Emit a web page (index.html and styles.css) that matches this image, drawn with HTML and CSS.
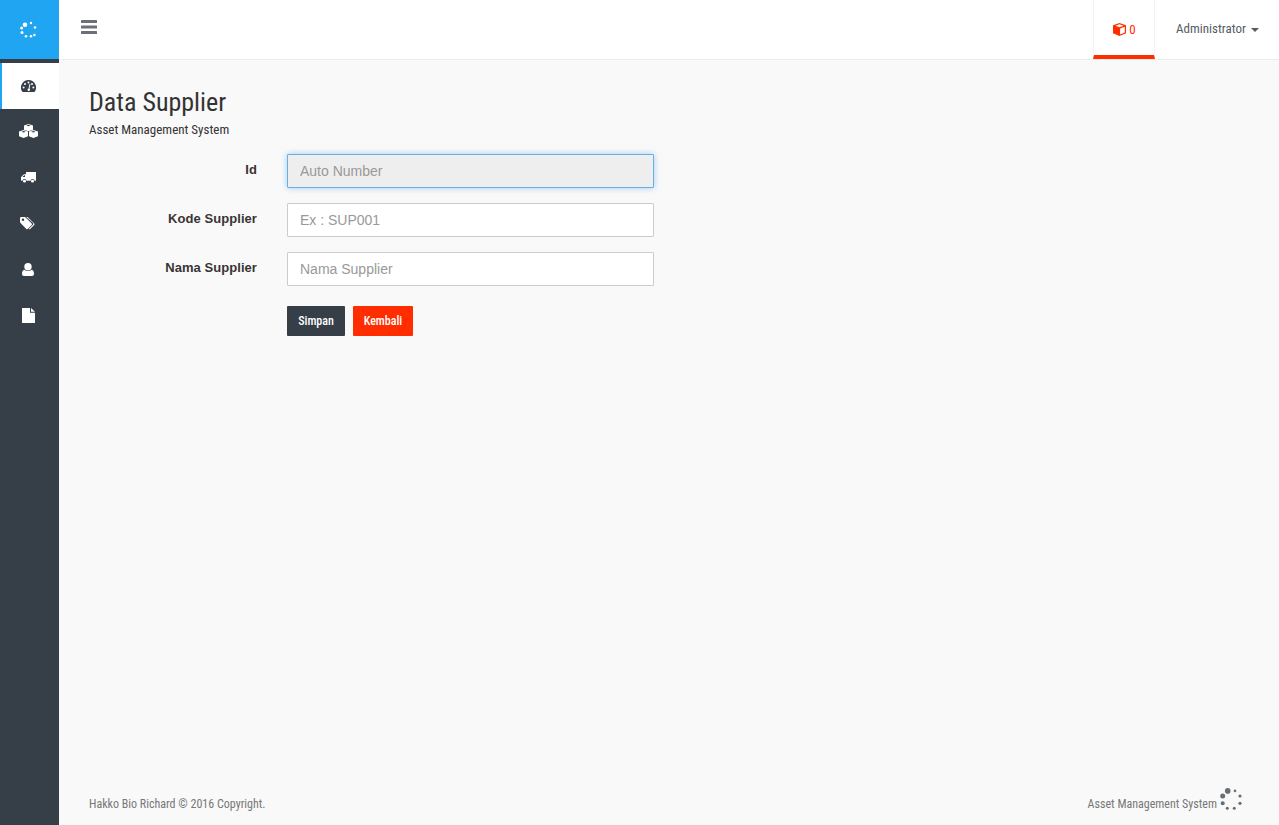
FILE: index.html
```html
<!DOCTYPE html>
<html lang="id">
<head>
<meta charset="utf-8">
<title>Data Supplier</title>
<link rel="stylesheet" href="styles.css">
</head>
<body>
<aside class="sidebar">
  <div class="logo">
    <svg width="20" height="20" viewBox="0 0 20 20" fill="#fff">
      <circle cx="6" cy="4.800" r="2.300"/><circle cx="12" cy="3" r="1.200"/><circle cx="16" cy="7.500" r="1.300"/><circle cx="15.400" cy="15" r="1.300"/><circle cx="12" cy="16.300" r="1.300"/><circle cx="7" cy="16.300" r="1.300"/><circle cx="3" cy="12.500" r="1.500"/><circle cx="2.600" cy="8" r="1.500"/>
    </svg>
  </div>
  <nav class="menu">
    <a class="menu-item active">
      <svg width="15" height="12" viewBox="0 0 15 12"><path fill="#363e48" d="M7.500 0a7.500 7.500 0 0 0-6.300 11.600l.4.4h11.800l.4-.4A7.500 7.500 0 0 0 7.500 0z"/><g fill="#fff"><circle cx="2.600" cy="7.600" r="1"/><circle cx="4" cy="4" r="1"/><circle cx="7.500" cy="2.500" r="1"/><circle cx="12.400" cy="7.600" r="1"/><circle cx="11" cy="4" r="1"/><path d="M8.600 3.800l.9.300-1 4.500a1.300 1.300 0 1 1-1-.2z"/></g></svg>
    </a>
    <a class="menu-item">
      <svg width="19" height="14" viewBox="0 0 19 15" preserveAspectRatio="none" fill="#fff"><path d="M9.500 0L14 1.700v4.400L9.500 7.800 5 6.100V1.700z"/><path d="M4.600 6.500L9 8.100v5L4.600 15 0 13.100v-5z"/><path d="M14.400 6.500L19 8.100v5L14.400 15 10 13.100v-5z"/><g fill="#363e48"><path d="M9.500 2.300L7.400 1.600l2.100-.8 2.100.8z"/><path d="M4.600 9L2.400 8.200l2.200-.8 2.200.8z"/><path d="M14.400 9l-2.200-.8 2.200-.8 2.200.8z"/><rect x="9.200" y="7.800" width=".6" height="6"/></g></svg>
    </a>
    <a class="menu-item">
      <svg width="15" height="11" viewBox="0 0 15 12" preserveAspectRatio="none" fill="#fff"><path d="M5 0h10v9.500h-1.500a2 2 0 0 0-4 0H5.500a2 2 0 0 0-4 0H.6A.6.6 0 0 1 0 9V5.500L3 2.500h2z"/><circle cx="3.500" cy="10" r="1.500"/><circle cx="11.500" cy="10" r="1.500"/><path fill="#363e48" d="M1.300 5.500L3.400 3.500H4v2z"/></svg>
    </a>
    <a class="menu-item">
      <svg width="16" height="13" viewBox="0 0 16 13" fill="#fff"><path d="M0 1.200A1.200 1.200 0 0 1 1.200 0h3.600l.8.400 6.100 6.100a1 1 0 0 1 0 1.400l-4 4a1 1 0 0 1-1.400 0L.3 5.800 0 5zm3 2.800a1.200 1.200 0 1 0-.1-2.400A1.200 1.200 0 0 0 3 4z"/><path d="M7.600 0l6.600 6.500c.4.400.4 1 0 1.400l-4 4.100c-.4.400-1 .4-1.500.1l4.300-4.400c.5-.6.500-1.200 0-1.700L6.300 0z"/></svg>
    </a>
    <a class="menu-item">
      <svg width="12" height="13" viewBox="0 0 12 13" fill="#fff"><circle cx="6" cy="3.700" r="3.700"/><path d="M2.400 6.700C3.300 7.500 4.500 8 6 8s2.700-.5 3.600-1.300C11.200 6.900 12 8.500 12 11c0 1.200-.8 2-2 2H2c-1.200 0-2-.8-2-2 0-2.500.8-4.100 2.400-4.300z"/></svg>
    </a>
    <a class="menu-item">
      <svg width="13" height="15" viewBox="0 0 13 15" fill="#fff"><path d="M0 0h8v4.800h5V15H0z"/><path d="M9 0l4 3.800H9z"/></svg>
    </a>
  </nav>
</aside>
<div class="main">
  <header class="topbar">
    <button class="toggle" type="button" aria-label="Menu">
      <svg width="16" height="14" viewBox="0 0 16 14" fill="#6b7078"><rect y="0" width="16" height="3" rx=".5"/><rect y="5.500" width="16" height="3" rx=".5"/><rect y="11" width="16" height="3" rx=".5"/></svg>
    </button>
    <div class="top-right">
      <a class="cart">
        <svg width="13" height="13" viewBox="0 0 13 13" fill="#ff2d00"><path d="M6.500 0L13 2.300v7.900L6.500 13 0 10.200V2.300zM6.500 1.200L2.400 2.700l4.100 1.500 4.100-1.500zM7.100 11.400l4.700-2V3.800L7.100 5.400z"/></svg>
        <span>0</span>
      </a>
      <a class="user">Administrator <i class="caret"></i></a>
    </div>
  </header>
  <main class="content">
    <h1 class="title">Data Supplier</h1>
    <p class="subtitle">Asset Management System</p>
    <form class="form">
      <div class="row">
        <label class="label" for="id">Id</label>
        <input class="field focus" id="id" type="text" placeholder="Auto Number" disabled>
      </div>
      <div class="row">
        <label class="label" for="kode">Kode Supplier</label>
        <input class="field" id="kode" type="text" placeholder="Ex : SUP001">
      </div>
      <div class="row">
        <label class="label" for="nama">Nama Supplier</label>
        <input class="field" id="nama" type="text" placeholder="Nama Supplier">
      </div>
      <div class="actions">
        <button class="btn btn-dark" type="button">Simpan</button>
        <button class="btn btn-red" type="button">Kembali</button>
      </div>
    </form>
  </main>
  <footer class="footer">
    <span>Hakko Bio Richard © 2016 Copyright.</span>
    <span class="brand">Asset Management System
      <svg width="23" height="23" viewBox="0 0 23 23" fill="#696d74"><circle cx="7.700" cy="2.900" r="2.800"/><circle cx="15" cy="2.900" r="1.300"/><circle cx="20" cy="8" r="1.600"/><circle cx="20" cy="15.300" r="1.600"/><circle cx="14.300" cy="20.300" r="1.500"/><circle cx="7.300" cy="20.300" r="1.500"/><circle cx="2.700" cy="15.300" r="2"/><circle cx="2.700" cy="8" r="2.500"/></svg>
    </span>
  </footer>
</div>
</body>
</html>
```
FILE: styles.css
```css
* { box-sizing: border-box; }
html, body { height: 100%; }
body {
  margin: 0;
  display: flex;
  height: 825px;
  overflow: hidden;
  background: #f9f9f9;
  color: #333;
  font-family: Roboto, "Liberation Sans", sans-serif;
  font-stretch: 75%;
}
.sidebar { width: 59px; flex: none; background: #363e48; }
.logo { height: 59px; padding-right: 1px; background: #1fa5f1; display: flex; align-items: center; justify-content: center; }
.menu { margin-top: 4px; display: flex; flex-direction: column; }
.menu-item { height: 46px; padding: 0 3px 2px 0; display: flex; align-items: center; justify-content: center; }
.menu-item.active { background: #fff; border-left: 2px solid #1fa5f1; padding: 0 5px 1px 0; }
.main { flex: 1; min-width: 0; display: flex; flex-direction: column; }
.topbar {
  height: 60px; flex: none; background: #fff; border-bottom: 1px solid #ececec;
  display: flex; justify-content: space-between; align-items: stretch;
}
.toggle { border: 0; background: none; padding: 0; margin-left: 22px; height: 54px; display: flex; align-items: center; }
.top-right { display: flex; font-size: 13px; }
.cart {
  width: 62px; border-left: 1px solid #f3f3f3; border-right: 1px solid #f3f3f3; border-bottom: 4px solid #ff2d00;
  color: #ff2d00; display: flex; align-items: center; justify-content: center; gap: 3px; padding: 3px 0 0 1px; height: 59px;
}
.user { width: 124px; padding-left: 21px; color: #555b63; display: flex; align-items: center; gap: 5px; height: 57px; }
.caret { width: 0; height: 0; border: 4px solid transparent; border-top-color: #555b63; border-bottom: 0; margin-top: 2px; }
.content { flex: 1; padding: 28px 30px 0; }
.title { margin: 0; font-size: 26px; font-weight: 400; line-height: 28px; color: #333; }
.subtitle { margin: 6px 0 0; font-size: 13px; line-height: 16px; color: #333; }
.form { margin-top: 16px; }
.row { display: flex; height: 34px; margin-bottom: 15px; }
.label {
  width: 168px; text-align: right; padding-top: 8px;
  font: bold 13px/16px "Liberation Sans", sans-serif; letter-spacing: .06px; color: #3a3434;
}
.field {
  width: 367px; height: 34px; margin-left: 30px; padding: 0 12px;
  border: 1px solid #ccc; border-radius: 1px; background: #fff;
  font: 14px "Liberation Sans", sans-serif; color: #555;
}
.field::placeholder { color: #999; opacity: 1; }
.field.focus { background: #eee; border-color: #66afe9; box-shadow: 0 0 6px rgba(102,175,233,.6); }
.actions { display: flex; gap: 8px; margin: 20px 0 0 198px; }
.btn {
  height: 30px; border: 0; border-radius: 1px; padding: 0; color: #fff;
  font-family: Roboto, "Liberation Sans", sans-serif; font-stretch: 75%; font-size: 12px; font-weight: 500;
}
.btn-dark { width: 58px; background: #363e48; }
.btn-red { width: 60px; background: #ff2d00; }
.footer {
  height: 44px; flex: none; display: flex; justify-content: space-between; align-items: center;
  padding: 2px 36px 0 30px; font-size: 12px; color: #777;
}
.brand { display: flex; align-items: center; gap: 3px; }
.brand svg { margin-top: -9px; }
```
